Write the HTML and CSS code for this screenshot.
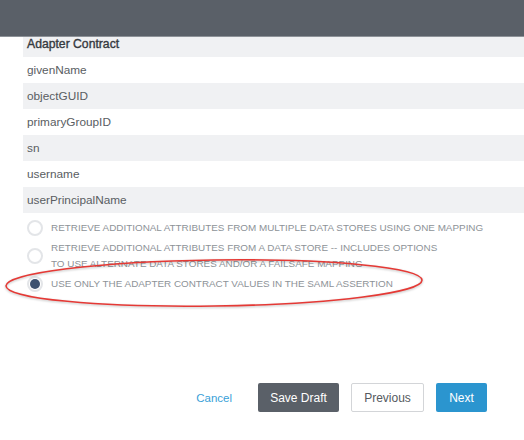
FILE: index.html
```html
<!DOCTYPE html>
<html>
<head>
<meta charset="utf-8">
<link rel="stylesheet" href="styles.css">
</head>
<body>
<div class="topbar"></div>
<div class="page">
  <div class="table">
    <div class="thead">Adapter Contract</div>
    <div class="row">givenName</div>
    <div class="row alt">objectGUID</div>
    <div class="row">primaryGroupID</div>
    <div class="row alt">sn</div>
    <div class="row">username</div>
    <div class="row alt">userPrincipalName</div>
  </div>
  <div class="options">
    <div class="option"><span class="radio"></span><span class="label">RETRIEVE ADDITIONAL ATTRIBUTES FROM MULTIPLE DATA STORES USING ONE MAPPING</span></div>
    <div class="option"><span class="radio"></span><span class="label">RETRIEVE ADDITIONAL ATTRIBUTES FROM A DATA STORE -- INCLUDES OPTIONS<br>TO USE ALTERNATE DATA STORES AND/OR A FAILSAFE MAPPING</span></div>
    <div class="option"><span class="radio checked"></span><span class="label">USE ONLY THE ADAPTER CONTRACT VALUES IN THE SAML ASSERTION</span></div>
  </div>
  <div class="footer">
    <a class="cancel">Cancel</a>
    <button class="btn dark">Save Draft</button>
    <button class="btn light">Previous</button>
    <button class="btn primary">Next</button>
  </div>
</div>
<svg class="annot" width="524" height="440" viewBox="0 0 524 440">
  <ellipse cx="214" cy="283" rx="208" ry="23" transform="rotate(-0.8 214 283)" fill="none" stroke="#e53935" stroke-width="1.6"/>
</svg>
</body>
</html>
```

FILE: styles.css
```css
html, body {
  margin: 0;
  padding: 0;
  background: #ffffff;
  font-family: "Liberation Sans", Arial, sans-serif;
}
body {
  position: relative;
  width: 524px;
  height: 440px;
  overflow: hidden;
}
.topbar {
  height: 36px;
  background: #5a6068;
  border-bottom: 1px solid #8d9298;
}
.page {
  display: flex;
  flex-direction: column;
}
.table {
  margin-left: 23px;
  display: flex;
  flex-direction: column;
}
.thead {
  height: 20px;
  box-sizing: border-box;
  background: #f0f1f3;
  padding: 0 0 6px 4px;
  line-height: 14px;
  font-size: 12.2px;
  color: #35393e;
  -webkit-text-stroke: 0.35px #35393e;
}
.row {
  height: 26px;
  line-height: 26px;
  padding-left: 4px;
  font-size: 11.8px;
  color: #595d62;
  background: #ffffff;
}
.row.alt {
  background: #f0f1f3;
}
.options {
  margin-top: 7px;
  padding-left: 27px;
  display: flex;
  flex-direction: column;
  gap: 4px;
}
.option {
  display: flex;
  align-items: center;
  gap: 8px;
}
.radio {
  width: 16px;
  height: 16px;
  box-sizing: border-box;
  border: 2px solid #e3e5e8;
  border-radius: 50%;
  background: #fff;
  flex: none;
  display: flex;
  align-items: center;
  justify-content: center;
}
.radio.checked::after {
  content: "";
  width: 10px;
  height: 10px;
  border-radius: 50%;
  background: #3e5270;
}
.label {
  font-size: 9.9px;
  line-height: 16px;
  color: #8d9297;
}
.footer {
  margin-top: 91px;
  display: flex;
  justify-content: flex-end;
  align-items: center;
  padding-right: 37px;
  gap: 12px;
}
.cancel {
  font-size: 11.5px;
  color: #3a9fd8;
  margin-right: 14px;
}
.btn {
  height: 29px;
  box-sizing: border-box;
  border-radius: 2px;
  font-family: "Liberation Sans", Arial, sans-serif;
  font-size: 12px;
  padding: 0;
  border: 1px solid transparent;
}
.btn.dark {
  width: 81px;
  background: #5a6068;
  color: #ffffff;
}
.btn.light {
  width: 73px;
  background: #ffffff;
  color: #555a60;
  border-color: #d3d5d8;
}
.btn.primary {
  width: 51px;
  background: #2b95cf;
  color: #ffffff;
}
.annot {
  position: absolute;
  left: 0;
  top: 0;
  pointer-events: none;
  filter: drop-shadow(0 1px 1px rgba(0,0,0,0.25));
}
```
